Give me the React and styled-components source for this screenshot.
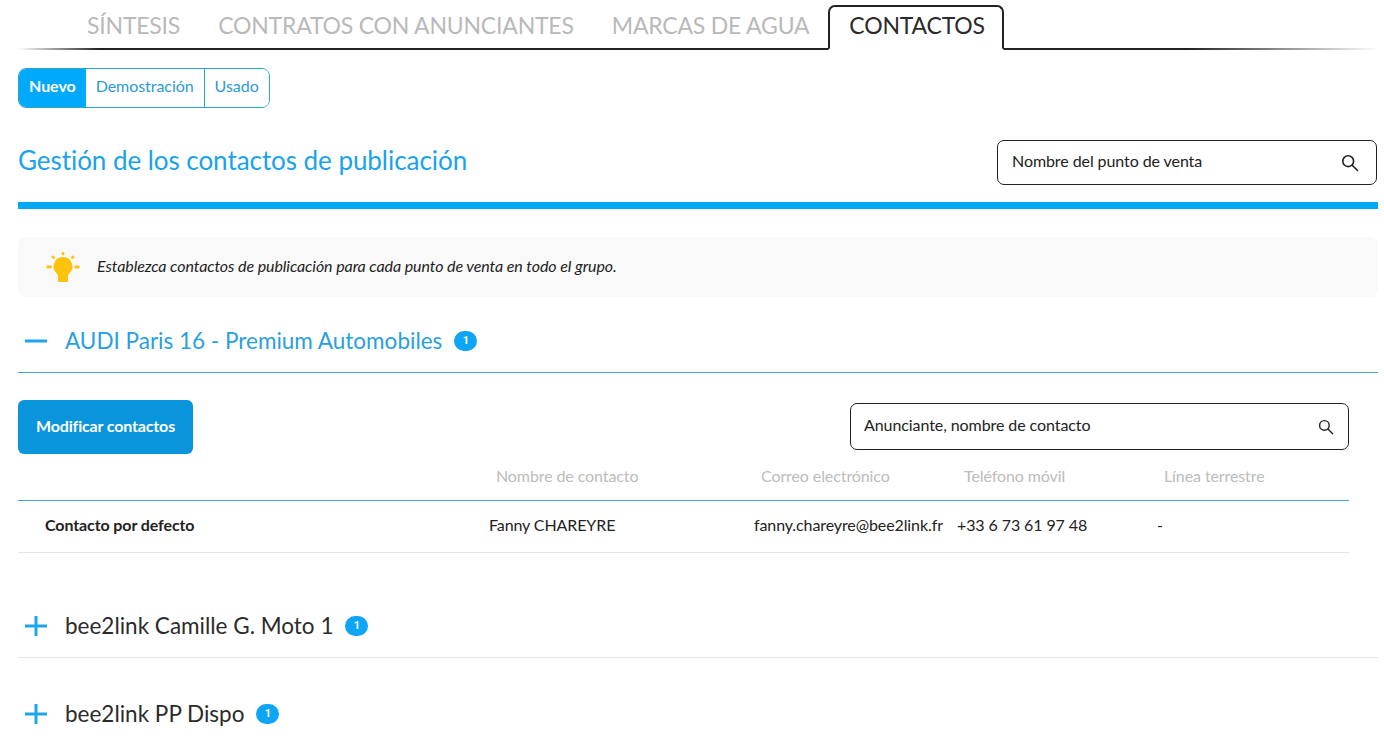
import React from "react";
import styled, { createGlobalStyle } from "styled-components";

const GlobalStyle = createGlobalStyle`
  html, body {
    margin: 0;
    padding: 0;
    background: #fff;
    font-family: "Lato", "Liberation Sans", sans-serif;
    color: #222;
  }
`;

const Page = styled.div`
  width: 1360px;
  height: 739px;
  overflow: hidden;
  padding-left: 18px;
`;

const Tabs = styled.div`
  display: flex;
  align-items: flex-end;
  height: 50px;
  padding-left: 50px;
  box-sizing: border-box;
  position: relative;
  &::after {
    content: "";
    position: absolute;
    left: 0;
    right: 0;
    bottom: 0;
    height: 2px;
    background: linear-gradient(to right, #fff 0%, #222 6%, #222 86%, #fff 100%);
  }
`;

const Tab = styled.div`
  position: relative;
  z-index: 1;
  box-sizing: border-box;
  height: 45px;
  padding: ${(p) => (p.$active ? "0 17px 0 19px" : "0 17px")};
  font-size: 23px;
  line-height: 37px;
  letter-spacing: -0.2px;
  white-space: nowrap;
  color: ${(p) => (p.$active ? "#2b2b2b" : "#b9b9b9")};
  border: 2px solid ${(p) => (p.$active ? "#222" : "transparent")};
  border-bottom: ${(p) => (p.$active ? "2px solid #fff" : "0")};
  border-radius: ${(p) => (p.$active ? "7px 7px 0 0" : "0")};
  background: ${(p) => (p.$active ? "#fff" : "transparent")};
`;

const Segments = styled.div`
  display: inline-flex;
  margin-top: 18px;
  height: 40px;
  box-sizing: border-box;
  border: 1px solid #2ba6c9;
  border-radius: 8px;
  overflow: hidden;
  vertical-align: top;
`;

const Segment = styled.div`
  font-size: 16px;
  line-height: 34px;
  padding: 0 10px;
  letter-spacing: -0.05px;
  color: ${(p) => (p.$active ? "#fff" : "#2a9bd8")};
  background: ${(p) => (p.$active ? "#00a9fb" : "#fff")};
  font-weight: ${(p) => (p.$active ? 700 : 400)};
  border-left: ${(p) => (p.$divider ? "1px solid #2ba6c9" : "0")};
`;

const TitleRow = styled.div`
  display: flex;
  align-items: center;
  justify-content: space-between;
  margin-top: 32px;
  height: 45px;
  padding-right: 1px;
`;

const PageTitle = styled.h1`
  margin: 0 0 6px;
  font-size: 26px;
  font-weight: 400;
  letter-spacing: -0.05px;
  color: #19a3ec;
`;

const SearchBox = styled.div`
  display: flex;
  align-items: center;
  justify-content: space-between;
  box-sizing: border-box;
  width: ${(p) => p.$width}px;
  height: ${(p) => p.$height}px;
  margin-top: ${(p) => p.$offset || 0}px;
  padding: 0 ${(p) => p.$right}px 0 ${(p) => p.$left}px;
  border: 1px solid #222;
  border-radius: 7px;
  font-size: 16px;
  letter-spacing: -0.08px;
  color: #222;
  background: #fff;
`;

const SearchLabel = styled.span`
  margin-top: -4px;
`;

const BlueBar = styled.div`
  margin-top: 17px;
  height: 7px;
  background: #00a9f4;
`;

const Hint = styled.div`
  display: flex;
  align-items: center;
  gap: 17px;
  height: 60px;
  margin-top: 28px;
  padding-left: 28px;
  background: #f9f9f9;
  border-radius: 8px;
  font-size: 16px;
  font-style: italic;
  letter-spacing: -0.08px;
  color: #222;
`;

const HintText = styled.span`
  margin-top: -4px;
`;

const AccordionHead = styled.div`
  display: flex;
  align-items: center;
  box-sizing: content-box;
  height: ${(p) => p.$height}px;
  margin-top: ${(p) => p.$top}px;
  padding: ${(p) => p.$pad}px 0 0 7px;
  border-bottom: ${(p) => (p.$line ? `1px solid ${p.$line}` : "0")};
`;

const AccordionTitle = styled.span`
  margin-left: 18px;
  font-size: 22.5px;
  color: ${(p) => (p.$open ? "#2a9fe0" : "#2b2b2b")};
`;

const Badge = styled.span`
  display: inline-flex;
  align-items: center;
  justify-content: center;
  width: 23px;
  height: 20px;
  margin-left: 12px;
  border-radius: 10px;
  background: #0ea5f5;
  color: #fff;
  font-size: 11px;
  font-weight: 700;
  font-family: "Roboto", "Liberation Sans", sans-serif;
`;

const Toolbar = styled.div`
  display: flex;
  align-items: flex-start;
  justify-content: space-between;
  width: 1331px;
  margin-top: 27px;
  height: 54px;
`;

const PrimaryButton = styled.button`
  height: 54px;
  width: 175px;
  padding: 0 0 4px;
  border: 0;
  border-radius: 6px;
  background: #0a94dc;
  color: #fff;
  font-family: inherit;
  font-size: 16px;
  font-weight: 700;
  letter-spacing: -0.15px;
`;

const Table = styled.div`
  width: 1331px;
`;

const TableRow = styled.div`
  display: grid;
  grid-template-columns: 471px 265px 203px 200px 1fr;
  align-items: center;
  box-sizing: content-box;
  height: ${(p) => p.$height}px;
  border-bottom: 1px solid ${(p) => p.$line};
`;

const HeadCell = styled.div`
  margin: -4px 0 0 7px;
  font-size: 16px;
  color: #bcbcbc;
  letter-spacing: -0.1px;
`;

const Cell = styled.div`
  margin-top: -4px;
  margin-left: ${(p) => p.$shift}px;
  font-size: 16px;
  letter-spacing: -0.1px;
  color: #222;
  font-weight: ${(p) => (p.$bold ? 700 : 400)};
  white-space: nowrap;
`;

const SearchIcon = ({ size }) => (
  <svg width={size} height={size} viewBox="0 0 18 18" fill="none" stroke="#222" strokeWidth="1.6">
    <circle cx="7.2" cy="7.2" r="5.4" />
    <path d="M11.2 11.2 L16.5 16.5" strokeLinecap="round" />
  </svg>
);

const ToggleIcon = ({ open }) => (
  <svg width="22" height="22" viewBox="0 0 22 22" fill="none" stroke="#1ca6ee" strokeWidth="3">
    <path d="M0 11 H22" />
    {!open && <path d="M11 1 V21" />}
  </svg>
);

const BulbIcon = () => (
  <svg width="34" height="31" viewBox="0 0 34 31">
    <g fill="#ffc20e">
      <path d="M17 5 a9.5 9.5 0 0 1 6 16.8 l-1 2.2 v5 a1 1 0 0 1 -1 1 h-8 a1 1 0 0 1 -1 -1 v-5 l-1 -2.2 A9.5 9.5 0 0 1 17 5 Z" />
    </g>
    <g stroke="#ffc20e" strokeWidth="2.8" strokeLinecap="round">
      <path d="M17 1.4 V2" />
      <path d="M7 5 L7.6 5.6" />
      <path d="M27 5 L26.4 5.6" />
      <path d="M1.6 15 H4.4" />
      <path d="M29.6 15 H32.4" />
    </g>
  </svg>
);

export default function App() {
  return (
    <>
      <GlobalStyle />
      <Page>
        <Tabs>
          <Tab>SÍNTESIS</Tab>
          <Tab>CONTRATOS CON ANUNCIANTES</Tab>
          <Tab>MARCAS DE AGUA</Tab>
          <Tab $active>CONTACTOS</Tab>
        </Tabs>

        <Segments>
          <Segment $active>Nuevo</Segment>
          <Segment>Demostración</Segment>
          <Segment $divider>Usado</Segment>
        </Segments>

        <TitleRow>
          <PageTitle>Gestión de los contactos de publicación</PageTitle>
          <SearchBox $width={380} $height={45} $left={14} $right={17}>
            <SearchLabel>Nombre del punto de venta</SearchLabel>
            <SearchIcon size={18} />
          </SearchBox>
        </TitleRow>

        <BlueBar />

        <Hint>
          <BulbIcon />
          <HintText>Establezca contactos de publicación para cada punto de venta en todo el grupo.</HintText>
        </Hint>

        <AccordionHead $height={63} $pad={12} $top={0} $line="#42abb8">
          <ToggleIcon open />
          <AccordionTitle $open>AUDI Paris 16 - Premium Automobiles</AccordionTitle>
          <Badge>1</Badge>
        </AccordionHead>

        <Toolbar>
          <PrimaryButton>Modificar contactos</PrimaryButton>
          <SearchBox $width={499} $height={47} $left={13} $right={14} $offset={3}>
            <SearchLabel>Anunciante, nombre de contacto</SearchLabel>
            <SearchIcon size={16} />
          </SearchBox>
        </Toolbar>

        <Table>
          <TableRow $height={46} $line="#42abb8">
            <span />
            <HeadCell>Nombre de contacto</HeadCell>
            <HeadCell>Correo electrónico</HeadCell>
            <HeadCell>Teléfono móvil</HeadCell>
            <HeadCell>Línea terrestre</HeadCell>
          </TableRow>
          <TableRow $height={51} $line="#e6e6e6">
            <Cell $bold $shift={27}>Contacto por defecto</Cell>
            <Cell $shift={0}>Fanny CHAREYRE</Cell>
            <Cell $shift={0}>fanny.chareyre@bee2link.fr</Cell>
            <Cell $shift={0}>+33 6 73 61 97 48</Cell>
            <Cell $shift={0}>-</Cell>
          </TableRow>
        </Table>

        <AccordionHead $height={63} $pad={12} $top={29} $line="#e6e6e6">
          <ToggleIcon />
          <AccordionTitle>bee2link Camille G. Moto 1</AccordionTitle>
          <Badge>1</Badge>
        </AccordionHead>

        <AccordionHead $height={63} $pad={12} $top={12}>
          <ToggleIcon />
          <AccordionTitle>bee2link PP Dispo</AccordionTitle>
          <Badge>1</Badge>
        </AccordionHead>
      </Page>
    </>
  );
}
